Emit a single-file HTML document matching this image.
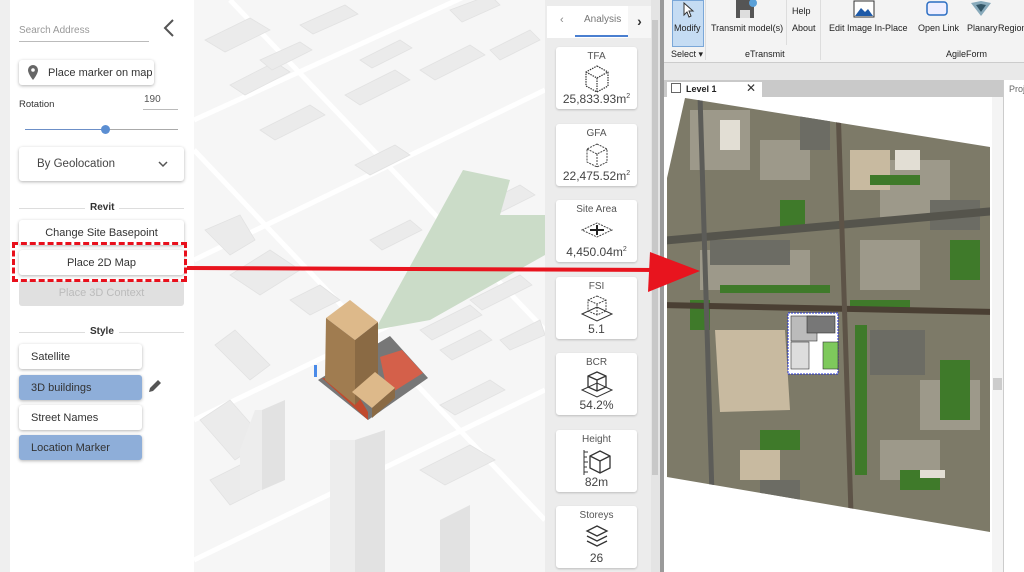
<!DOCTYPE html>
<html><head><meta charset="utf-8"><style>
*{margin:0;padding:0;box-sizing:border-box}
body{width:1024px;height:572px;overflow:hidden;position:relative;background:#fff;font-family:"Liberation Sans",sans-serif;color:#333}
.abs{position:absolute}
.btn{position:absolute;background:#fff;border-radius:3px;box-shadow:0 1px 3px rgba(0,0,0,.3);font-size:11px;color:#333;display:flex;align-items:center}
.card{position:absolute;left:556px;width:81px;height:62px;background:#fff;border-radius:3px;box-shadow:0 1px 2px rgba(0,0,0,.2);text-align:center;font-size:10px;color:#555}
.card .t{margin-top:4px}
.card .v{position:absolute;bottom:3px;width:100%;font-size:12px;color:#444}
.card svg{display:block;margin:2px auto 0}
.rb{position:absolute;font-size:9px;color:#222}
</style></head><body>
<div class="abs" style="left:0;top:0;width:10px;height:572px;background:#efefef"></div>
<div class="abs" style="left:10px;top:0;width:184px;height:572px;background:#fff"></div>
<div class="abs" style="left:19px;top:25px;font-size:10px;color:#999">Search Address</div>
<div class="abs" style="left:19px;top:41px;width:130px;height:1px;background:#bbb"></div>
<svg class="abs" style="left:162px;top:18px" width="14" height="20"><path d="M11 2 L3 10 L11 18" stroke="#555" stroke-width="2" fill="none"/></svg>
<div class="btn" style="left:19px;top:60px;width:135px;height:25px"><svg width="28" height="20" viewBox="0 0 28 20"><path d="M14 2a5 5 0 0 0-5 5c0 4 5 10 5 10s5-6 5-10a5 5 0 0 0-5-5z" fill="#666"/><circle cx="14" cy="7" r="1.8" fill="#fff"/></svg><span style="margin-left:1px">Place marker on map</span></div>
<div class="abs" style="left:19px;top:99px;font-size:9.5px">Rotation</div>
<div class="abs" style="left:144px;top:94px;font-size:10px;color:#555">190</div>
<div class="abs" style="left:143px;top:109px;width:35px;height:1px;background:#bbb"></div>
<div class="abs" style="left:25px;top:129px;width:81px;height:1px;background:#6c8fc7"></div>
<div class="abs" style="left:106px;top:129px;width:72px;height:1px;background:#aaa"></div>
<div class="abs" style="left:101px;top:125px;width:9px;height:9px;border-radius:50%;background:#5b8ed2"></div>
<div class="btn" style="left:19px;top:147px;width:165px;height:34px;font-size:11.5px;color:#444"><span style="margin-left:18px">By Geolocation</span><svg style="position:absolute;left:139px;top:13px" width="10" height="8"><path d="M1 2l4 4 4-4" stroke="#555" stroke-width="1.5" fill="none"/></svg></div>
<div class="abs" style="left:19px;top:208px;width:165px;height:1px;background:#ddd"></div>
<div class="abs" style="left:85px;top:202px;padding:0 5px;background:#fff;font-size:10px;font-weight:bold">Revit</div>
<div class="btn" style="left:19px;top:220px;width:165px;height:25px;justify-content:center">Change Site Basepoint</div>
<div class="btn" style="left:19px;top:250px;width:165px;height:25px;justify-content:center">Place 2D Map</div>
<div class="abs" style="left:19px;top:281px;width:165px;height:25px;background:#e0e0e0;border-radius:3px;font-size:11px;color:#bbb;text-align:center;line-height:25px">Place 3D Context</div>
<div class="abs" style="left:12px;top:242px;width:175px;height:40px;border:3px dashed #e8101c"></div>
<div class="abs" style="left:19px;top:332px;width:165px;height:1px;background:#ddd"></div>
<div class="abs" style="left:85px;top:326px;padding:0 5px;background:#fff;font-size:10px;font-weight:bold">Style</div>
<div class="btn" style="left:19px;top:344px;width:123px;height:25px"><span style="margin-left:12px">Satellite</span></div>
<div class="btn" style="left:19px;top:375px;width:123px;height:25px;background:#8eaed9"><span style="margin-left:12px">3D buildings</span></div>
<svg class="abs" style="left:147px;top:378px" width="16" height="16"><path d="M2 14l1-4 8-8 3 3-8 8z" fill="#555"/></svg>
<div class="btn" style="left:19px;top:405px;width:123px;height:25px"><span style="margin-left:12px">Street Names</span></div>
<div class="btn" style="left:19px;top:435px;width:123px;height:25px;background:#8eaed9"><span style="margin-left:12px">Location Marker</span></div>
<!-- map -->
<svg class="abs" style="left:194px;top:0" width="351" height="572" viewBox="194 0 351 572">
<rect x="194" y="0" width="351" height="572" fill="#f6f6f6"/>
<g stroke="#fff" stroke-width="5" fill="none"><path d="M194 120 L545 -40"/><path d="M194 260 L545 90"/><path d="M194 420 L545 250"/><path d="M194 560 L545 390"/><path d="M230 0 L545 330"/><path d="M194 150 L545 520"/></g>
<g fill="#ebebeb" stroke="#e2e2e2" stroke-width=".8">
<path d="M205 40 L250 18 L270 30 L225 52Z"/><path d="M230 85 L275 62 L290 72 L245 95Z"/><path d="M260 60 L300 42 L312 50 L272 70Z"/>
<path d="M300 25 L345 5 L358 14 L313 34Z"/><path d="M345 95 L395 70 L410 80 L360 105Z"/><path d="M360 60 L400 40 L412 48 L372 68Z"/>
<path d="M260 130 L310 105 L325 115 L275 140Z"/><path d="M355 165 L395 145 L410 155 L370 175Z"/>
<path d="M420 70 L470 45 L485 55 L435 80Z"/><path d="M450 10 L490 -5 L500 5 L462 22Z"/><path d="M490 50 L530 30 L540 40 L500 60Z"/>
<path d="M205 230 L240 215 L255 240 L230 255Z"/><path d="M370 240 L410 220 L422 230 L382 250Z"/>
<path d="M230 275 L270 250 L300 270 L260 295Z"/><path d="M290 300 L320 285 L340 300 L310 315Z"/>
<path d="M215 345 L235 330 L270 365 L250 380Z"/><path d="M200 420 L230 400 L265 440 L235 460Z"/>
<path d="M420 330 L470 305 L482 315 L432 340Z"/><path d="M440 350 L480 330 L492 340 L452 360Z"/>
<path d="M470 300 L520 275 L532 285 L482 310Z"/><path d="M500 340 L540 320 L545 335 L510 350Z"/>
<path d="M210 480 L240 465 L260 490 L230 505Z"/><path d="M440 405 L490 380 L505 390 L455 415Z"/>
<path d="M420 470 L470 445 L495 460 L445 485Z"/><path d="M470 210 L520 185 L535 195 L485 220Z"/>
</g>
<path d="M463 170 L510 180 L500 215 L545 215 L545 255 L430 320 L375 330Z" fill="#cbdcc8"/>
<g fill="#e2e2e2"><path d="M262 410 L285 400 L285 480 L262 490Z"/><path d="M355 440 L385 430 L385 572 L355 572Z"/><path d="M440 520 L470 505 L470 572 L440 572Z"/></g>
<g fill="#ededed"><path d="M255 410 L262 410 L262 490 L240 490 L240 450Z"/><path d="M330 440 L355 440 L355 572 L330 572Z"/></g>
<path d="M318 380 L390 336 L428 378 L368 420Z" fill="#777"/>
<path d="M322 378 L350 382 L368 412 L368 420Z" fill="#c04a2e"/>
<path d="M380 357 L402 350 L423 373 L388 395Z" fill="#d4604a"/>
<path d="M326 318 L350 300 L378 322 L355 340Z" fill="#ddb98a"/>
<path d="M326 318 L355 340 L355 405 L325 380Z" fill="#a07c50"/>
<path d="M355 340 L378 322 L378 380 L355 405Z" fill="#8a6a44"/>
<path d="M352 392 L375 372 L395 388 L372 408Z" fill="#ddb98a"/>
<path d="M372 408 L395 388 L395 398 L372 418Z" fill="#8a6a44"/>
<rect x="314" y="365" width="3" height="12" fill="#4a8ae8"/>
</svg>
<!-- analysis panel -->
<div class="abs" style="left:545px;top:0;width:106px;height:572px;background:#ececec"></div>
<div class="abs" style="left:547px;top:6px;width:104px;height:32px;background:#fff"></div>
<div class="abs" style="left:560px;top:14px;font-size:11px;color:#888">‹</div>
<div class="abs" style="left:584px;top:14px;font-size:10px;color:#777">Analysis</div>
<div class="abs" style="left:575px;top:35px;width:53px;height:2px;background:#4a7fd0"></div>
<div class="abs" style="left:628px;top:6px;width:23px;height:32px;background:#f6f6f6;font-size:14px;font-weight:bold;text-align:center;line-height:30px">›</div>
<div class="abs" style="left:651px;top:0;width:9px;height:572px;background:#e4e4e4"></div>
<div class="abs" style="left:652px;top:20px;width:6px;height:455px;background:#c8c8c8"></div>
<div class="abs" style="left:660px;top:0;width:4px;height:572px;background:#9a9a9a"></div>
<div class="card" style="top:47px"><div class="t">TFA</div><svg width="26" height="30"><path d="M13 2L24 8V22L13 28L2 22V8Z M2 8L13 14L24 8 M13 14V28" stroke="#333" fill="none" stroke-width="1.2" stroke-dasharray="1.5 1"/></svg><div class="v">25,833.93m<sup style="font-size:7px">2</sup></div></div>
<div class="card" style="top:124px"><div class="t">GFA</div><svg width="26" height="30"><path d="M13 3L23 8V21L13 26L3 21V8Z M3 8L13 13L23 8 M13 13V26" stroke="#444" fill="none" stroke-width="1" stroke-dasharray="2 1"/></svg><div class="v">22,475.52m<sup style="font-size:7px">2</sup></div></div>
<div class="card" style="top:200px"><div class="t">Site Area</div><svg width="34" height="26"><path d="M2 13L17 6L32 13L17 20Z" stroke="#444" fill="none" stroke-dasharray="2 1"/><path d="M10 13H24M17 8V18" stroke="#222" stroke-width="2"/></svg><div class="v">4,450.04m<sup style="font-size:7px">2</sup></div></div>
<div class="card" style="top:277px"><div class="t">FSI</div><svg width="34" height="32"><path d="M17 2L26 6V17L17 21L8 17V6Z M8 6L17 10L26 6 M17 10V21" stroke="#444" fill="none" stroke-dasharray="2 1"/><path d="M2 20L17 13L32 20L17 27Z" stroke="#333" fill="none"/></svg><div class="v">5.1</div></div>
<div class="card" style="top:353px"><div class="t">BCR</div><svg width="34" height="32"><path d="M17 2L26 6V17L17 21L8 17V6Z M8 6L17 10L26 6 M17 10V21" stroke="#333" fill="none" stroke-width="1.3"/><path d="M2 20L17 13L32 20L17 27Z" stroke="#333" fill="none"/></svg><div class="v">54.2%</div></div>
<div class="card" style="top:430px"><div class="t">Height</div><svg width="34" height="30"><path d="M4 3V28M4 5H8M4 10H7M4 15H8M4 20H7M4 25H8" stroke="#333"/><path d="M20 4L30 9V21L20 26L10 21V9Z M10 9L20 14L30 9 M20 14V26" stroke="#333" fill="none" stroke-width="1.3"/></svg><div class="v">82m</div></div>
<div class="card" style="top:506px"><div class="t">Storeys</div><svg width="26" height="30"><path d="M13 3L23 8L13 13L3 8Z M3 13L13 18L23 13 M3 18L13 23L23 18" stroke="#333" fill="none" stroke-width="1.3"/></svg><div class="v">26</div></div>
<!-- revit -->
<div class="abs" style="left:664px;top:0;width:360px;height:62px;background:#f3f3f3"></div>
<div class="abs" style="left:664px;top:62px;width:360px;height:18px;background:#e9e9e9;border-top:1px solid #ccc"></div>
<div class="abs" style="left:672px;top:0;width:32px;height:47px;background:#c5dcf3;border:1px solid #7aa7d8"></div>
<svg class="abs" style="left:681px;top:2px" width="14" height="16"><path d="M3 1V13L6 10L8 15L10 14L8 9L12 9Z" fill="#fff" stroke="#333"/></svg>
<div class="rb" style="left:674px;top:23px">Modify</div>
<div class="rb" style="left:671px;top:49px">Select ▾</div>
<div class="abs" style="left:705px;top:0;width:1px;height:60px;background:#ddd"></div>
<svg class="abs" style="left:734px;top:0" width="24" height="20"><rect x="2" y="0" width="18" height="18" fill="#555"/><rect x="6" y="10" width="10" height="8" fill="#ddd"/><circle cx="19" cy="3" r="4" fill="#5aa0d8"/></svg>
<div class="rb" style="left:711px;top:23px">Transmit model(s)</div>
<div class="rb" style="left:745px;top:49px">eTransmit</div>
<div class="abs" style="left:786px;top:0;width:1px;height:45px;background:#ddd"></div>
<div class="rb" style="left:792px;top:6px">Help</div>
<div class="rb" style="left:792px;top:23px">About</div>
<div class="abs" style="left:820px;top:0;width:1px;height:60px;background:#ddd"></div>
<svg class="abs" style="left:853px;top:0" width="22" height="18"><rect x="1" y="1" width="20" height="16" fill="#fff" stroke="#333"/><path d="M2 16L8 8L12 12L15 9L20 16Z" fill="#1e5aa8"/></svg>
<div class="rb" style="left:829px;top:23px">Edit Image In-Place</div>
<svg class="abs" style="left:925px;top:0" width="24" height="18"><rect x="2" y="2" width="20" height="13" rx="3" fill="#eef" stroke="#2a6dc2" stroke-width="1.5"/></svg>
<div class="rb" style="left:918px;top:23px">Open Link</div>
<svg class="abs" style="left:970px;top:0" width="22" height="18"><path d="M1 3L11 1L21 3L11 16Z" fill="#8ab"/><path d="M6 5L11 4L16 5L11 12Z" fill="#356"/></svg>
<div class="rb" style="left:967px;top:23px">Planary</div>
<div class="rb" style="left:998px;top:23px">Region</div>
<div class="rb" style="left:946px;top:49px">AgileForm</div>
<div class="abs" style="left:664px;top:80px;width:340px;height:17px;background:#c9c9c9"></div>
<div class="abs" style="left:667px;top:82px;width:95px;height:15px;background:#fff"></div>
<div class="rb" style="left:686px;top:84px;font-weight:bold">Level 1</div>
<div class="abs" style="left:671px;top:83px;width:10px;height:10px;border:1px solid #666"></div>
<div class="abs" style="left:746px;top:81px;font-size:12px">✕</div>
<div class="abs" style="left:666px;top:97px;width:337px;height:475px;background:#fff"></div>
<div class="abs" style="left:992px;top:97px;width:11px;height:475px;background:#f4f4f4"></div>
<div class="abs" style="left:993px;top:378px;width:9px;height:12px;background:#ccc"></div>
<svg class="abs" style="left:666px;top:97px" width="326" height="475" viewBox="666 97 326 475">
<clipPath id="c"><path d="M685 98 L990 147 L990 532 L667 477 L667 178Z"/></clipPath>
<g clip-path="url(#c)">
<rect x="660" y="90" width="340" height="450" fill="#7d7a68"/>
<g fill="#9d998a"><rect x="690" y="110" width="60" height="60"/><rect x="760" y="140" width="50" height="40"/><rect x="880" y="160" width="70" height="60"/><rect x="700" y="250" width="110" height="40"/><rect x="860" y="240" width="60" height="50"/><rect x="920" y="380" width="60" height="50"/><rect x="880" y="440" width="60" height="40"/></g>
<g fill="#c8baa0"><path d="M715 330 L785 330 L790 410 L720 412Z"/><rect x="850" y="150" width="40" height="40"/><rect x="740" y="450" width="40" height="30"/></g>
<g fill="#6c6c64"><rect x="710" y="240" width="80" height="25"/><rect x="870" y="330" width="55" height="45"/><rect x="800" y="110" width="30" height="40"/><rect x="930" y="200" width="50" height="30"/><rect x="760" y="480" width="40" height="40"/></g>
<g fill="#3f7a2a"><rect x="850" y="300" width="60" height="8"/><rect x="720" y="285" width="110" height="8"/><rect x="870" y="175" width="50" height="10"/><rect x="855" y="325" width="12" height="150"/><rect x="940" y="360" width="30" height="60"/><rect x="760" y="430" width="40" height="20"/><rect x="780" y="200" width="25" height="30"/><rect x="950" y="240" width="30" height="40"/><rect x="690" y="300" width="20" height="30"/><rect x="900" y="470" width="40" height="20"/></g>
<g fill="#e2ded4"><rect x="720" y="120" width="20" height="30"/><rect x="920" y="470" width="25" height="8"/><rect x="895" y="150" width="25" height="20"/></g>
<path d="M660 241 L995 211" stroke="#55544c" stroke-width="8"/>
<path d="M660 305 L995 312" stroke="#4a3f33" stroke-width="6"/>
<path d="M838 105 L852 545" stroke="#5d5347" stroke-width="5"/>
<path d="M700 95 L712 495" stroke="#5c5c58" stroke-width="5"/>
</g>
<rect x="788" y="313" width="50" height="61" fill="#fff" stroke="#2230d0" stroke-dasharray="2 1"/>
<rect x="791" y="316" width="26" height="25" fill="#bbb" stroke="#333" stroke-width=".6"/>
<rect x="807" y="316" width="28" height="17" fill="#777" stroke="#333" stroke-width=".6"/>
<rect x="791" y="342" width="18" height="27" fill="#ddd" stroke="#333" stroke-width=".6"/>
<rect x="823" y="342" width="15" height="27" fill="#7ec95c" stroke="#333" stroke-width=".6"/>
</svg>
<div class="abs" style="left:1003px;top:80px;width:21px;height:492px;background:#fff;border-left:1px solid #ccc"></div>
<div class="rb" style="left:1009px;top:84px;color:#666">Proj</div>
<svg class="abs" style="left:0;top:0" width="1024" height="572">
<path d="M187 268 L655 270" stroke="#e8141e" stroke-width="4"/>
<path d="M650 252 L700 271 L648 292Z" fill="#e8141e"/>
</svg>
</body></html>
